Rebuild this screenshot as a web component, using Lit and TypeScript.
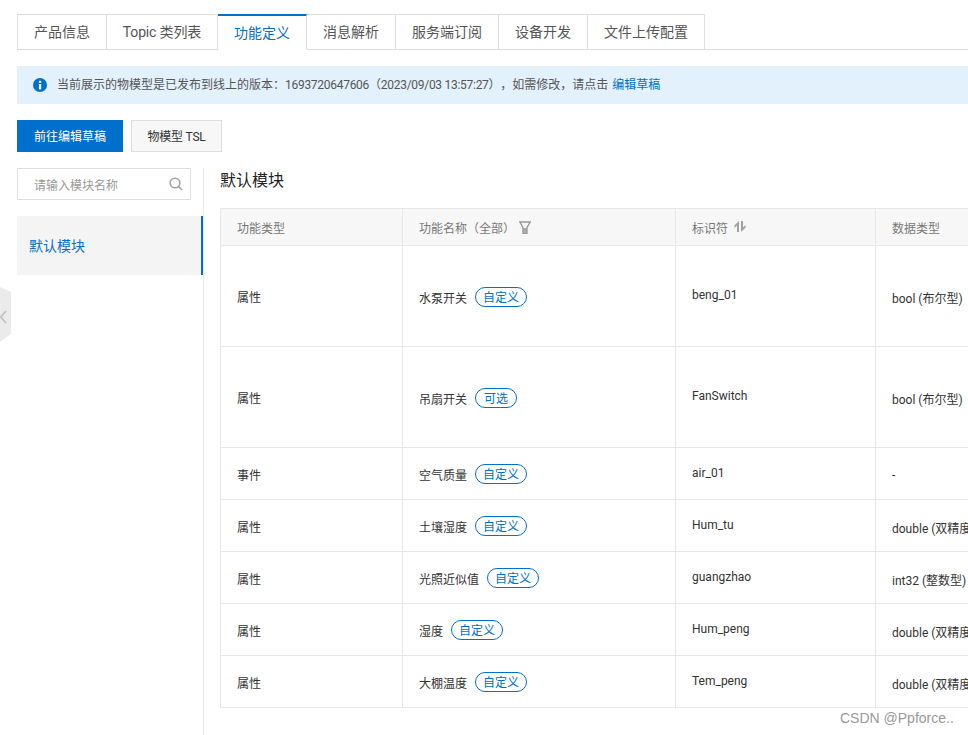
import { LitElement, html, css } from "lit";
import { customElement } from "lit/decorators.js";

const rows = [
  { type: "属性", name: "水泵开关", tag: "自定义", id: "beng_01", data: "bool (布尔型)", tall: true },
  { type: "属性", name: "吊扇开关", tag: "可选", id: "FanSwitch", data: "bool (布尔型)", tall: true },
  { type: "事件", name: "空气质量", tag: "自定义", id: "air_01", data: "-", tall: false },
  { type: "属性", name: "土壤湿度", tag: "自定义", id: "Hum_tu", data: "double (双精度浮点型)", tall: false },
  { type: "属性", name: "光照近似值", tag: "自定义", id: "guangzhao", data: "int32 (整数型)", tall: false },
  { type: "属性", name: "湿度", tag: "自定义", id: "Hum_peng", data: "double (双精度浮点型)", tall: false },
  { type: "属性", name: "大棚温度", tag: "自定义", id: "Tem_peng", data: "double (双精度浮点型)", tall: false },
];
const tabs = ["产品信息", "Topic 类列表", "功能定义", "消息解析", "服务端订阅", "设备开发", "文件上传配置"];

@customElement("app-root")
export class AppRoot extends LitElement {
  static styles = css`
    :host {
      display: block;
      width: 968px;
      height: 735px;
      overflow: hidden;
      position: relative;
      background: #fff;
      font-family: Roboto, "Noto Sans CJK SC", sans-serif;
      font-size: 12px;
      color: #333;
    }
    .page { padding: 14px 0 0 17px; width: 1100px; box-sizing: border-box; }
    .tabs { display: flex; height: 36px; width: 951px; border-bottom: 1px solid #dedede; box-sizing: border-box; }
    .tab {
      height: 36px; box-sizing: border-box; border: 1px solid #dedede; border-left: 0; background: #fff;
      padding: 0 16px; font-size: 14px; line-height: 35px; color: #555; white-space: nowrap;
    }
    .tab:first-child { border-left: 1px solid #dedede; }
    .tab:nth-child(2) { width: 111px; padding: 0; text-align: center; letter-spacing: -0.15px; }
    .tab.active { color: #0070cc; border-top: 2px solid #0070cc; border-bottom-color: #fff; line-height: 34px; }
    .alert {
      margin-top: 16px; height: 38px; background: #e3f1fd; display: flex; align-items: center;
      padding-left: 16px; color: #555; white-space: pre; text-spacing-trim: space-all; line-height: 40px;
    }
    .alert svg { margin-right: 10px; flex: none; }
    .alert .num { letter-spacing: -0.28px; }
    .alert a { color: #0070cc; margin-left: 4px; }
    .actions { display: flex; gap: 8px; margin-top: 16px; }
    .btn { height: 32px; box-sizing: border-box; font-size: 12px; text-align: center; }
    .btn.primary { background: #0070cc; color: #fff; width: 106px; line-height: 35px; }
    .btn.ghost { background: #f7f7f7; border: 1px solid #dedede; line-height: 33px; color: #333; width: 91px; letter-spacing: -0.2px; }
    .main { display: flex; margin-top: 16px; }
    .side { width: 186px; height: 567px; flex: none; border-right: 1px solid #e8e8e8; box-sizing: content-box; }
    .search {
      width: 174px; height: 32px; box-sizing: border-box; border: 1px solid #dedede; display: flex;
      align-items: center; justify-content: space-between; padding: 0 7px 0 16px; color: #999;
    }
    .item {
      margin-top: 16px; height: 59px; box-sizing: border-box; background: #f4f4f4; border-right: 2px solid #0070cc;
      color: #0070cc; font-size: 14px; line-height: 60px; padding-left: 12px;
    }
    .content { margin-left: 16px; }
    h2 { margin: 0; font-size: 16px; font-weight: 400; color: #222; line-height: 26px; height: 40px; }
    table { border-collapse: collapse; table-layout: fixed; width: 880px; }
    col.a { width: 182px; } col.b { width: 273px; } col.c { width: 200px; } col.d { width: 225px; }
    th, td { border: 1px solid #e8e8e8; padding: 0 16px; text-align: left; font-weight: 400; white-space: nowrap; overflow: hidden; }
    th { background: #f7f7f7; height: 36px; color: #777; }
    th .in { display: flex; align-items: center; }
    td { height: 51px; color: #333; }
    tr.tall td { height: 100px; }
    .cellA { display: block; margin-top: 1px; }
    .cellC { display: block; margin-top: -2px; }
    .cellD { display: block; margin-top: 3px; }
    .name { display: flex; align-items: center; gap: 8px; margin-top: 1px; }
    .name span:first-child { margin-top: 1px; }
    .tag {
      border: 1px solid #0070cc; border-radius: 10px; height: 20px; line-height: 20px; box-sizing: border-box; padding: 0 7px;
      color: #0070cc; min-width: 42px; text-align: center;
    }
    .icon-gap { margin-left: 4px; }
    .icon-gap.sort { margin-left: 6px; }
    .collapse {
      position: absolute; left: 0; top: 287px; width: 11px; height: 55px; background: #ebebeb;
      clip-path: polygon(0 0, 100% 5px, 100% 47px, 0 100%);
      display: flex; align-items: center;
    }
    .collapse svg { margin-top: 5px; }
    .mark { position: absolute; left: 840px; top: 709px; font-size: 14px; line-height: 18px; color: #999; font-family: "Liberation Sans", sans-serif; }
  `;

  render() {
    return html`
      <div class="page">
        <div class="tabs">
          ${tabs.map((t) => html`<div class="tab ${t === "功能定义" ? "active" : ""}">${t}</div>`)}
        </div>
        <div class="alert">
          <svg width="14" height="14" viewBox="0 0 14 14">
            <circle cx="7" cy="7" r="7" fill="#0070cc"></circle>
            <rect x="5.9" y="6" width="2.3" height="5.4" fill="#fff"></rect>
            <rect x="5.9" y="2.8" width="2.3" height="2.1" fill="#fff"></rect>
          </svg>当前展示的物模型是已发布到线上的版本：<span class="num">1693720647606（2023/09/03 13:57:27）</span>，如需修改，请点击<a>编辑草稿</a>
        </div>
        <div class="actions">
          <div class="btn primary">前往编辑草稿</div>
          <div class="btn ghost">物模型 TSL</div>
        </div>
        <div class="main">
          <div class="side">
            <div class="search">
              <span>请输入模块名称</span>
              <svg width="14" height="14" viewBox="0 0 14 14" fill="none" stroke="#a3a3a3" stroke-width="1.6">
                <circle cx="6" cy="6" r="4.8"></circle>
                <path d="M9.5 9.5 L13 13"></path>
              </svg>
            </div>
            <div class="item">默认模块</div>
          </div>
          <div class="content">
            <h2>默认模块</h2>
            <table>
              <colgroup><col class="a" /><col class="b" /><col class="c" /><col class="d" /></colgroup>
              <thead>
                <tr>
                  <th>功能类型</th>
                  <th>
                    <div class="in">功能名称（全部）
                      <svg class="icon-gap" width="12" height="13" viewBox="0 0 12 13" fill="none" stroke="#999" stroke-width="1.4">
                        <path d="M0.8 1 H11.2 L8 6.4 V12.2 H4 V6.4 Z"></path>
                        <path d="M4 7 H8 V12.2 H4 Z" fill="#a8a8a8" stroke="none"></path>
                      </svg>
                    </div>
                  </th>
                  <th>
                    <div class="in">标识符
                      <svg class="icon-gap sort" width="12" height="12" viewBox="0 0 12 12" fill="#a0a0a0">
                        <path d="M5 0 V11 H3 V4.4 L0.4 7 V4.6 Z"></path>
                        <path d="M7 0 H9 V6.6 L11.6 4 V6.4 L7 11 Z"></path>
                      </svg>
                    </div>
                  </th>
                  <th>数据类型</th>
                </tr>
              </thead>
              <tbody>
                ${rows.map(
                  (r) => html`<tr class=${r.tall ? "tall" : ""}>
                    <td><span class="cellA">${r.type}</span></td>
                    <td><div class="name"><span>${r.name}</span><span class="tag">${r.tag}</span></div></td>
                    <td><span class="cellC">${r.id}</span></td>
                    <td><span class="cellD">${r.data}</span></td>
                  </tr>`
                )}
              </tbody>
            </table>
          </div>
        </div>
      </div>
      <div class="collapse">
        <svg width="7" height="16" viewBox="0 0 7 16" fill="none" stroke="#c2c2c2" stroke-width="1.8"><path d="M6 2 L0.8 8 L6 14"></path></svg>
      </div>
      <div class="mark">CSDN @Ppforce..</div>
    `;
  }
}
